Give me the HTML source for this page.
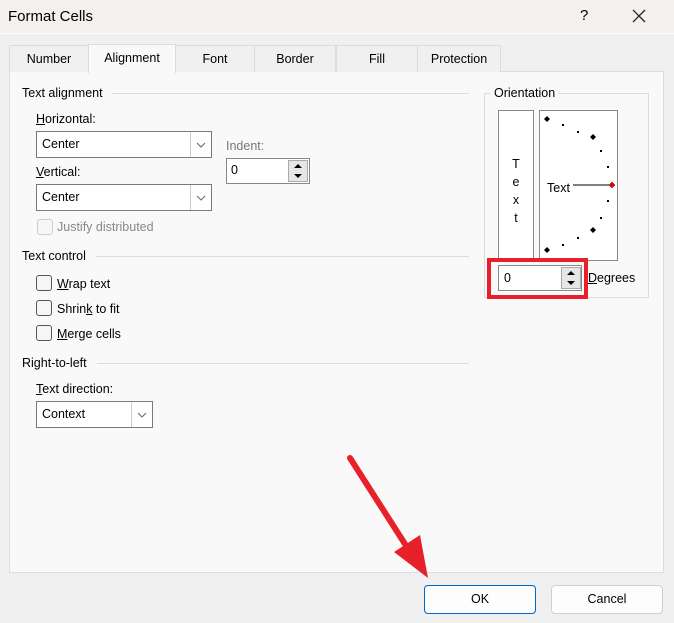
<!DOCTYPE html>
<html><head><style>
*{box-sizing:border-box;margin:0;padding:0}
body{width:674px;height:623px;background:#f0f0f0;font-family:"Liberation Sans",sans-serif;font-size:12.5px;color:#000;position:relative;overflow:hidden}
.a{position:absolute}
.tab{position:absolute;top:45px;height:27px;border:1px solid #dcdcdc;border-bottom:none;background:#f0f0f0;text-align:center;line-height:27px}
.grp{position:absolute;height:1px;background:#dcdcdc}
.dd{position:absolute;background:#fff;border:1px solid #7a7a7a;height:27px;line-height:25px;padding-left:5px}
.dd .b{position:absolute;right:0;top:0;width:21px;height:25px;border-left:1px solid #ccc;background:#fff}
.cb{position:absolute;width:16px;height:16px;border:1px solid #555;border-radius:3px;background:#f6f6f6}
u{text-decoration:underline}
</style></head><body>
<div class="a" style="left:0;top:0;width:674px;height:34px;background:#f3f1ef;border-bottom:1px solid #fff"></div>
<div class="a" style="left:8px;top:8px;font-size:15px">Format Cells</div>
<div class="a" style="left:580px;top:7px;font-size:15px">?</div>
<svg class="a" style="left:632px;top:9px" width="14" height="14"><path d="M1 1L13 13M13 1L1 13" stroke="#222" stroke-width="1.3"/></svg>
<div class="a" style="left:9px;top:71px;width:655px;height:502px;background:#f9f9f9;border:1px solid #dcdcdc"></div>
<div class="tab" style="left:9px;width:80px">Number</div>
<div class="tab" style="left:88px;width:88px;top:44px;height:29px;background:#f9f9f9">Alignment</div>
<div class="tab" style="left:175px;width:80px">Font</div>
<div class="tab" style="left:254px;width:82px">Border</div>
<div class="tab" style="left:336px;width:82px">Fill</div>
<div class="tab" style="left:417px;width:84px">Protection</div>

<div class="a" style="left:22px;top:86px">Text alignment</div>
<div class="grp" style="left:112px;top:93px;width:357px"></div>
<div class="a" style="left:36px;top:112px"><u>H</u>orizontal:</div>
<div class="dd" style="left:36px;top:131px;width:176px">Center<div class="b"><svg width="21" height="25"><path d="M6 11l4 4 4-4" fill="none" stroke="#666"/></svg></div></div>
<div class="a" style="left:226px;top:139px;color:#777">Indent:</div>
<div class="a" style="left:226px;top:158px;width:84px;height:26px;background:#fff;border:1px solid #888;padding:4px 0 0 4px">0</div>
<div class="a" style="left:288px;top:160px;width:20px;height:22px;background:#e6e6e6;border:1px solid #aaa"></div>
<svg class="a" style="left:292px;top:162px" width="12" height="18"><path d="M2 6h8L6 2z M2 12h8L6 16z" fill="#000"/></svg>
<div class="a" style="left:36px;top:165px"><u>V</u>ertical:</div>
<div class="dd" style="left:36px;top:184px;width:176px">Center<div class="b"><svg width="21" height="25"><path d="M6 11l4 4 4-4" fill="none" stroke="#666"/></svg></div></div>
<div class="cb" style="left:37px;top:219px;border-color:#ccc"></div>
<div class="a" style="left:57px;top:220px;color:#888">Justify distributed</div>

<div class="a" style="left:22px;top:249px">Text control</div>
<div class="grp" style="left:96px;top:256px;width:373px"></div>
<div class="cb" style="left:36px;top:275px"></div><div class="a" style="left:57px;top:277px"><u>W</u>rap text</div>
<div class="cb" style="left:36px;top:300px"></div><div class="a" style="left:57px;top:302px">Shrin<u>k</u> to fit</div>
<div class="cb" style="left:36px;top:325px"></div><div class="a" style="left:57px;top:327px"><u>M</u>erge cells</div>
<div class="a" style="left:22px;top:356px">Right-to-left</div>
<div class="grp" style="left:97px;top:363px;width:372px"></div>
<div class="a" style="left:36px;top:382px"><u>T</u>ext direction:</div>
<div class="dd" style="left:36px;top:401px;width:117px">Context<div class="b"><svg width="21" height="25"><path d="M6 11l4 4 4-4" fill="none" stroke="#666"/></svg></div></div>

<div class="a" style="left:484px;top:93px;width:165px;height:205px;border:1px solid #dcdcdc"></div>
<div class="a" style="left:491px;top:86px;background:#f9f9f9;padding:0 3px">Orientation</div>
<div class="a" style="left:498px;top:110px;width:36px;height:151px;border:1px solid #888;background:#fff"></div>
<div class="a" style="left:512px;top:155px;line-height:18px;text-align:center;width:8px">T<br>e<br>x<br>t</div>
<div class="a" style="left:539px;top:110px;width:79px;height:151px;border:1px solid #888;background:#fff"></div>
<svg class="a" style="left:539px;top:110px" width="79" height="151">
<g fill="#000"><path d="M8 6l3 3-3 3-3-3z M8 137l3 3-3 3-3-3z M54 24l3 3-3 3-3-3z M54 117l3 3-3 3-3-3z"/>
<rect x="23" y="14" width="2" height="2"/><rect x="38" y="21" width="2" height="2"/><rect x="61" y="40" width="2" height="2"/><rect x="68" y="56" width="2" height="2"/><rect x="68" y="90" width="2" height="2"/><rect x="61" y="107" width="2" height="2"/><rect x="38" y="127" width="2" height="2"/><rect x="23" y="134" width="2" height="2"/></g>
<path d="M34 75H72" stroke="#000"/><path d="M73 72l3 3-3 3-3-3z" fill="#e00" stroke="#600" stroke-width=".5"/></svg>
<div class="a" style="left:547px;top:181px">Text</div>
<div class="a" style="left:498px;top:265px;width:84px;height:26px;background:#fff;border:1px solid #888;padding:5px 0 0 5px">0</div>
<div class="a" style="left:561px;top:267px;width:20px;height:22px;background:#e6e6e6;border:1px solid #aaa"></div>
<svg class="a" style="left:565px;top:269px" width="12" height="18"><path d="M2 6h8L6 2z M2 12h8L6 16z" fill="#000"/></svg>
<div class="a" style="left:588px;top:271px"><u>D</u>egrees</div>
<div class="a" style="left:487px;top:258px;width:101px;height:41px;border:4px solid #e8202a"></div>

<div class="a" style="left:424px;top:585px;width:112px;height:29px;background:#fdfdfd;border:1px solid #0067c0;border-radius:4px;text-align:center;line-height:27px">OK</div>
<div class="a" style="left:551px;top:585px;width:112px;height:29px;background:#fdfdfd;border:1px solid #d0d0d0;border-radius:4px;text-align:center;line-height:27px">Cancel</div>
<svg class="a" style="left:0;top:0" width="674" height="623"><path d="M350 458L405 544" stroke="#e8202a" stroke-width="6" stroke-linecap="round"/><path d="M394 552L420 535L428 578z" fill="#e8202a"/></svg>
</body></html>
